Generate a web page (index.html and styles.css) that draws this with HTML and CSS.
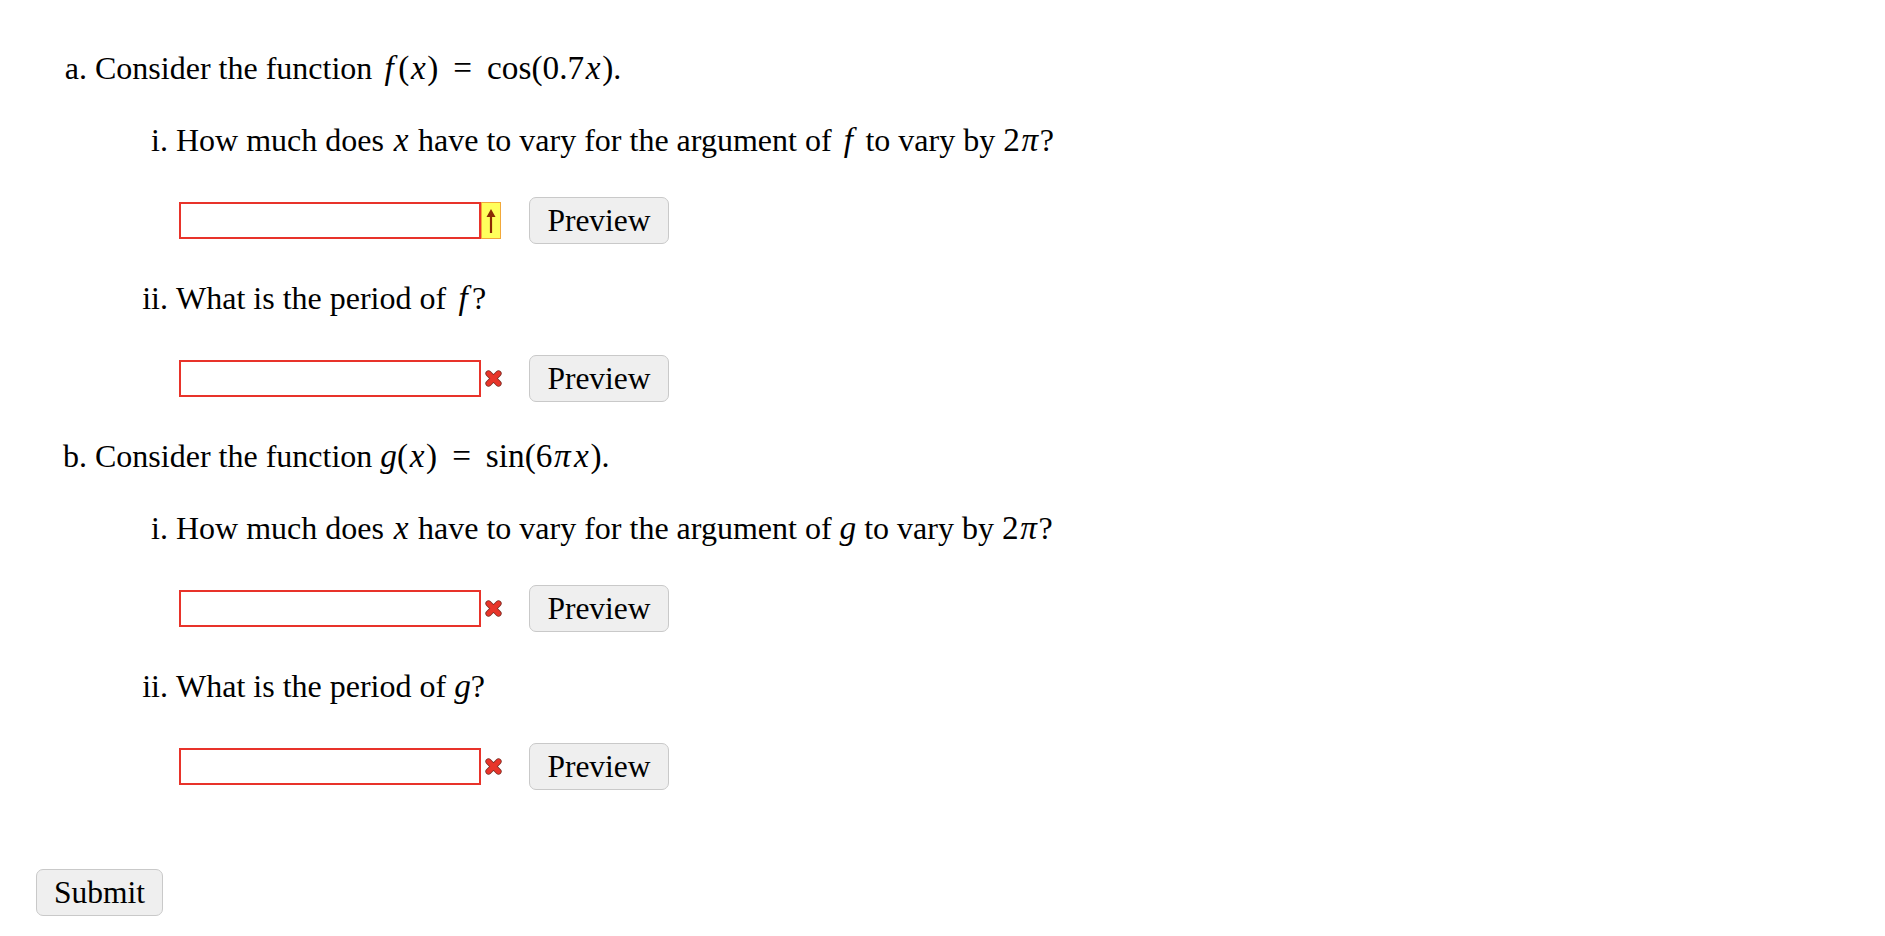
FILE: index.html
```html
<!DOCTYPE html>
<html lang="en">
<head>
    <meta charset="UTF-8">
    <title>Problem</title>
    <link rel="stylesheet" href="styles.css">
</head>
<body>
    <form class="problem">
        <ol class="parts">
            <li>
                <p class="q">Consider the function <span class="math"><i class="f">f</i>(<i>x</i>)<span class="rel">=</span>cos(0.7<i>x</i>)</span>.</p>
                <ol class="sub">
                    <li>
                        <p class="q">How much does <span class="math"><i>x</i></span> have to vary for the argument of <span class="math"><i class="f">f</i></span> to vary by <span class="math">2<i>π</i></span>?</p>
                        <div class="answer">
                            <input type="text" class="ans-box">
                            <span class="flag warn">
                                <svg width="10" height="26" viewBox="0 0 10 26"><path d="M5 25V7" stroke="#8b2a05" stroke-width="2.2"/><path d="M5 1L9.5 9H0.5Z" fill="#8b2a05"/></svg>
                            </span>
                            <button type="button" class="btn preview">Preview</button>
                        </div>
                    </li>
                    <li>
                        <p class="q">What is the period of <span class="math"><i class="f">f</i></span>?</p>
                        <div class="answer">
                            <input type="text" class="ans-box">
                            <span class="flag wrong">
                                <svg width="17" height="17" viewBox="0 0 17 17"><path d="M3.5 3.5L13.5 13.5M13.5 3.5L3.5 13.5" stroke="#7c2b22" stroke-width="6.2" stroke-linecap="round"/><path d="M3.5 3.5L13.5 13.5M13.5 3.5L3.5 13.5" stroke="#e8352a" stroke-width="4.6" stroke-linecap="round"/></svg>
                            </span>
                            <button type="button" class="btn preview">Preview</button>
                        </div>
                    </li>
                </ol>
            </li>
            <li>
                <p class="q">Consider the function <span class="math"><i class="g">g</i>(<i>x</i>)<span class="rel">=</span>sin(6<i>π</i><i>x</i>)</span>.</p>
                <ol class="sub">
                    <li>
                        <p class="q">How much does <span class="math"><i>x</i></span> have to vary for the argument of <span class="math"><i class="g">g</i></span> to vary by <span class="math">2<i>π</i></span>?</p>
                        <div class="answer">
                            <input type="text" class="ans-box">
                            <span class="flag wrong">
                                <svg width="17" height="17" viewBox="0 0 17 17"><path d="M3.5 3.5L13.5 13.5M13.5 3.5L3.5 13.5" stroke="#7c2b22" stroke-width="6.2" stroke-linecap="round"/><path d="M3.5 3.5L13.5 13.5M13.5 3.5L3.5 13.5" stroke="#e8352a" stroke-width="4.6" stroke-linecap="round"/></svg>
                            </span>
                            <button type="button" class="btn preview">Preview</button>
                        </div>
                    </li>
                    <li>
                        <p class="q">What is the period of <span class="math"><i class="g">g</i></span>?</p>
                        <div class="answer">
                            <input type="text" class="ans-box">
                            <span class="flag wrong">
                                <svg width="17" height="17" viewBox="0 0 17 17"><path d="M3.5 3.5L13.5 13.5M13.5 3.5L3.5 13.5" stroke="#7c2b22" stroke-width="6.2" stroke-linecap="round"/><path d="M3.5 3.5L13.5 13.5M13.5 3.5L3.5 13.5" stroke="#e8352a" stroke-width="4.6" stroke-linecap="round"/></svg>
                            </span>
                            <button type="button" class="btn preview">Preview</button>
                        </div>
                    </li>
                </ol>
            </li>
        </ol>
        <button type="button" class="btn submit">Submit</button>
    </form>
</body>
</html>
```

FILE: styles.css
```css
body {
    margin: 0;
    font-family: "Liberation Serif", "Times New Roman", serif;
    font-size: 32px;
    line-height: 33px;
    color: #000;
    background: #fff;
}
.problem {
    padding-top: 51px;
}
.parts {
    list-style: lower-alpha;
    margin: 0;
    padding-left: 95px;
}
.parts > li + li {
    margin-top: 37px;
}
.sub {
    list-style: lower-roman;
    margin: 39px 0 0 0;
    padding-left: 81px;
}
.sub > li + li {
    margin-top: 37px;
}
.q {
    margin: 0;
    height: 33px;
}
.math {
    white-space: nowrap;
    font-size: 1.04em;
    line-height: 1;
}
.math i {
    font-style: italic;
    padding: 0 0.05em;
}
.math i.f {
    padding: 0 0.13em;
}
.math i.g {
    padding: 0;
}
.rel {
    padding: 0 0.45em;
}
.answer {
    display: flex;
    align-items: center;
    height: 47px;
    margin-top: 41px;
    padding-left: 3px;
}
.ans-box {
    box-sizing: border-box;
    width: 302px;
    height: 37px;
    margin: 0;
    border: 2px solid #e8332a;
    background: #fff;
    outline: none;
}
.flag {
    display: flex;
    align-items: center;
    justify-content: center;
}
.flag.warn {
    box-sizing: border-box;
    width: 20px;
    height: 37px;
    background: #ffff5c;
    border: 1.5px solid #f2a83a;
}
.flag.wrong {
    width: 17px;
    margin-left: 4px;
    margin-right: -1px;
}
.btn {
    box-sizing: border-box;
    height: 47px;
    padding: 0 17px;
    font-family: "Liberation Serif", "Times New Roman", serif;
    font-size: 31.5px;
    color: #000;
    background: #efefef;
    border: 1.5px solid #c9c9c9;
    border-radius: 7px;
}
.preview {
    width: 140px;
    margin-left: 28px;
}
.submit {
    width: 127px;
    margin: 79px 0 0 36px;
}
```
